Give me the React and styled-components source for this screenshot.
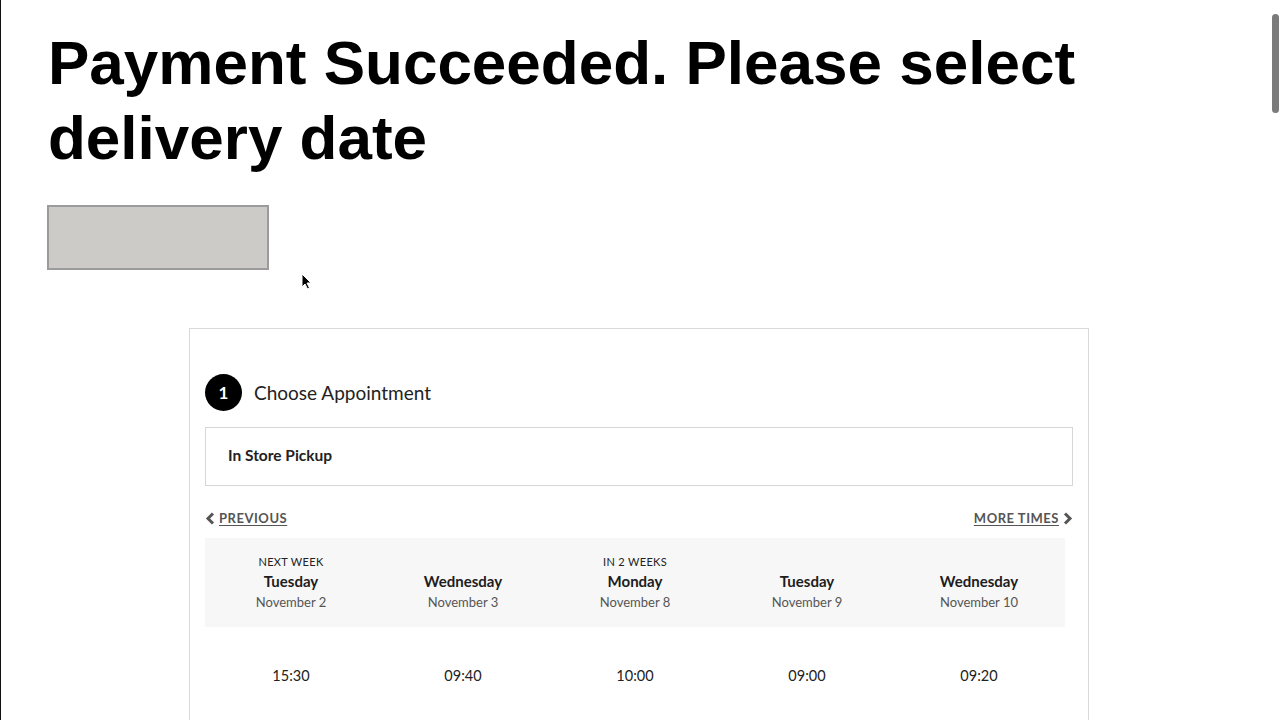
import React from 'react';
import styled, {createGlobalStyle} from 'styled-components';

const GlobalStyle = createGlobalStyle`
    html, body {
        margin: 0;
        padding: 0;
        background: #fff;
        overflow: hidden;
    }
    * {
        box-sizing: border-box;
    }
`

const Page = styled.main`
    position: relative;
    min-height: 720px;
    border-left: 1px solid #111;
    padding: 25px 48px 0 47px;
    font-family: "Lato", "Liberation Sans", sans-serif;
    color: #222;
`

const Title = styled.h1`
    margin: 0;
    font-family: "Liberation Sans", Arial, sans-serif;
    font-weight: 700;
    font-size: 62px;
    line-height: 75px;
    color: #000;
    max-width: 1100px;
`

const Placeholder = styled.div`
    width: 222px;
    height: 65px;
    margin: 30px 0 0 -1px;
    background: #cccbc7;
    border: 2px solid #9b9b9b;
`

const Card = styled.section`
    width: 900px;
    margin: 58px auto 0;
    padding: 45px 15px 40px;
    border: 1px solid #d9d9d9;
    transform: translateX(-1px);
`

const StepHead = styled.div`
    display: flex;
    align-items: center;
    gap: 12px;
`

const StepNumber = styled.span`
    width: 37px;
    height: 37px;
    border-radius: 50%;
    background: #000;
    color: #fff;
    display: flex;
    align-items: center;
    justify-content: center;
    font-size: 17px;
    font-weight: 700;
`

const StepTitle = styled.h2`
    margin: 0;
    font-size: 19px;
    font-weight: 400;
    color: #222;
`

const PickupBox = styled.div`
    margin-top: 16px;
    height: 59px;
    border: 1px solid #d6d6d6;
    display: flex;
    align-items: center;
    padding: 0 22px 4px;
    font-size: 15.5px;
    font-weight: 700;
    color: #222;
`

const NavRow = styled.div`
    display: flex;
    justify-content: space-between;
    align-items: center;
    margin-top: 23px;
    height: 18px;
`

const NavLink = styled.a`
    display: flex;
    align-items: center;
    gap: 4px;
    font-size: 13px;
    font-weight: 700;
    letter-spacing: 0.04em;
    color: #555;
    text-transform: uppercase;
    text-decoration: underline;
    text-underline-offset: 2px;
    cursor: pointer;

    svg {
        width: 10px;
        height: 13px;
    }
`

const Schedule = styled.div`
    width: 860px;
    margin-top: 11px;
`

const DayBand = styled.div`
    display: grid;
    grid-template-columns: repeat(5, 1fr);
    height: 89px;
    background: #f7f7f7;
`

const DayCell = styled.div`
    display: flex;
    flex-direction: column;
    align-items: center;
    justify-content: flex-end;
    padding-bottom: 15px;
`

const DayTag = styled.span`
    font-size: 11px;
    letter-spacing: 0.03em;
    color: #222;
    line-height: 16px;
`

const DayName = styled.span`
    font-size: 15px;
    font-weight: 700;
    color: #1d1d1d;
    line-height: 22px;
`

const DayDate = styled.span`
    font-size: 13px;
    color: #555;
    line-height: 20px;
`

const TimeRow = styled.div`
    display: grid;
    grid-template-columns: repeat(5, 1fr);
    margin-top: 38px;
`

const TimeSlot = styled.button`
    background: none;
    border: none;
    font-family: inherit;
    font-size: 14.5px;
    color: #222;
    padding: 0;
    line-height: 22px;
    cursor: pointer;
`

const ScrollThumb = styled.div`
    position: absolute;
    top: 14px;
    right: 1px;
    width: 7px;
    height: 99px;
    border-radius: 4px;
    background: #7b7b7b;
`

const Pointer = styled.svg`
    position: absolute;
    left: 300px;
    top: 273px;
    width: 11px;
    height: 17px;
`

const days = [
    {tag: 'Next week', name: 'Tuesday', date: 'November 2', time: '15:30'},
    {tag: '', name: 'Wednesday', date: 'November 3', time: '09:40'},
    {tag: 'In 2 weeks', name: 'Monday', date: 'November 8', time: '10:00'},
    {tag: '', name: 'Tuesday', date: 'November 9', time: '09:00'},
    {tag: '', name: 'Wednesday', date: 'November 10', time: '09:20'},
];

const Chevron = ({dir}) => (
    <svg viewBox="0 0 10 13" fill="none" stroke="currentColor" strokeWidth="3" strokeLinejoin="miter">
        {dir === 'left'
            ? <path d="M8 1.5 L3 6.5 L8 11.5" />
            : <path d="M2 1.5 L7 6.5 L2 11.5" />}
    </svg>
);

const App = () => {
    return <React.Fragment>
        <GlobalStyle />
        <Page>
            <Title>Payment Succeeded. Please select delivery date</Title>
            <Placeholder />

            <Card>
                <StepHead>
                    <StepNumber>1</StepNumber>
                    <StepTitle>Choose Appointment</StepTitle>
                </StepHead>

                <PickupBox>In Store Pickup</PickupBox>

                <NavRow>
                    <NavLink><Chevron dir="left" />Previous</NavLink>
                    <NavLink>More times<Chevron dir="right" /></NavLink>
                </NavRow>

                <Schedule>
                    <DayBand>
                        {days.map((d, i) => (
                            <DayCell key={i}>
                                {d.tag && <DayTag>{d.tag.toUpperCase()}</DayTag>}
                                <DayName>{d.name}</DayName>
                                <DayDate>{d.date}</DayDate>
                            </DayCell>
                        ))}
                    </DayBand>
                    <TimeRow>
                        {days.map((d, i) => (
                            <TimeSlot key={i}>{d.time}</TimeSlot>
                        ))}
                    </TimeRow>
                </Schedule>
            </Card>

            <Pointer viewBox="0 0 11 17">
                <path d="M1 1 L1 14 L4 11 L6.5 16 L8.5 15 L6 10 L10 10 Z" fill="#000" stroke="#fff" strokeWidth="1" />
            </Pointer>
            <ScrollThumb />
        </Page>
    </React.Fragment>
}

export default App;
